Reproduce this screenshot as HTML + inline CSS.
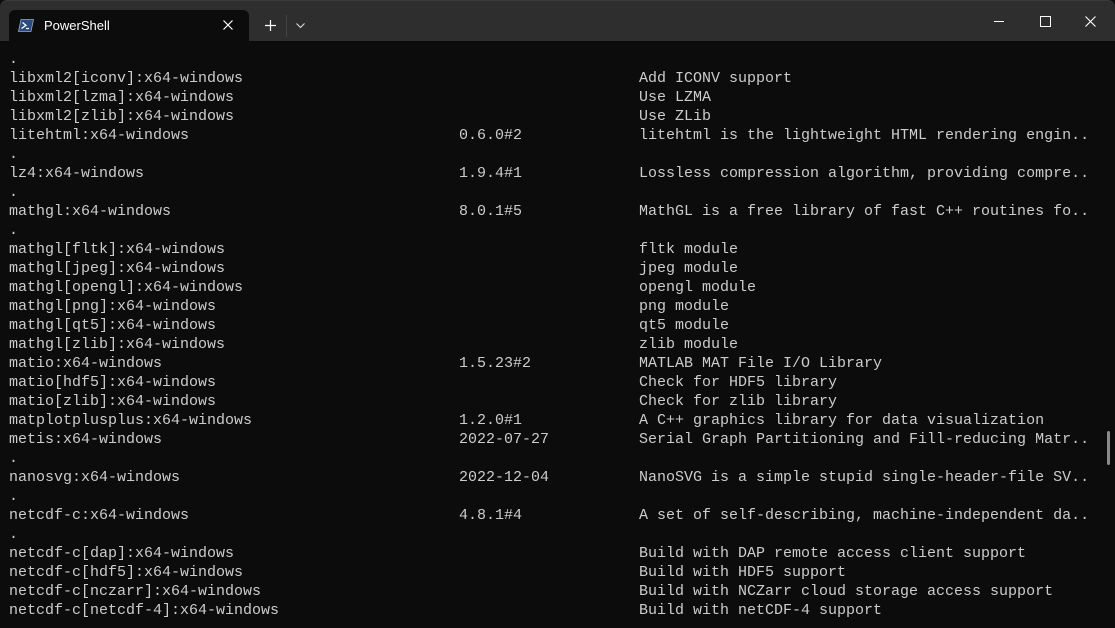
<!DOCTYPE html>
<html><head><meta charset="utf-8"><style>
html,body{margin:0;padding:0;width:1115px;height:628px;overflow:hidden;background:#0c0c0c}
.tb{position:absolute;left:0;top:0;width:1115px;height:41px;background:#2e2e2e;border-top:1px solid #3a3a3a;border-radius:7px 7px 0 0;box-sizing:border-box}
.tab{position:absolute;left:9px;top:9px;width:240px;height:32px;background:#0c0c0c;border-radius:6px 6px 0 0}
.tab .t{position:absolute;left:35px;top:8px;font:13px "Liberation Sans",sans-serif;color:#fff}
.term{position:absolute;left:0;top:50px;width:1115px;font:15px/19px "Liberation Mono",monospace;color:#cccccc}
.r{position:relative;height:19px;white-space:pre}
.r span{position:absolute;top:0}
.a{left:9px}.b{left:459px}.c{left:639px}
.sb{position:absolute;left:1107px;top:431px;width:3px;height:34px;background:#8a8a8a;border-radius:2px}
</style></head><body>
<div class="tb">
<div class="tab">
<svg style="position:absolute;left:9px;top:9px" width="16" height="13" viewBox="0 0 16 13"><path d="M3 0.5H15.5L13 12.5H0.5Z" fill="#2b4a80" stroke="#9ab" stroke-width="0.8"/><path d="M4.5 3.5L8 6.3L3.5 9.5" stroke="#fff" stroke-width="1.3" fill="none"/><path d="M8 9.5H11" stroke="#fff" stroke-width="1.2"/></svg>
<span class="t">PowerShell</span>
<svg style="position:absolute;left:214px;top:10px" width="10" height="10"><path d="M0.5 0.5L9.5 9.5M9.5 0.5L0.5 9.5" stroke="#fff" stroke-width="1.2"/></svg>
</div>
<svg style="position:absolute;left:265px;top:19px" width="11" height="11"><path d="M5.5 0V11M0 5.5H11" stroke="#fff" stroke-width="1.2"/></svg>
<div style="position:absolute;left:286px;top:14px;width:1px;height:22px;background:#444"></div>
<svg style="position:absolute;left:296px;top:22px" width="9" height="6"><path d="M0.5 0.5L4.5 4.5L8.5 0.5" stroke="#ddd" stroke-width="1.1" fill="none"/></svg>
<div style="position:absolute;left:994px;top:20px;width:10px;height:1px;background:#fff"></div>
<div style="position:absolute;left:1040px;top:15px;width:9px;height:9px;border:1px solid #fff"></div>
<svg style="position:absolute;left:1085px;top:15px" width="11" height="11"><path d="M0.5 0.5L10.5 10.5M10.5 0.5L0.5 10.5" stroke="#fff" stroke-width="1.1"/></svg>
</div>
<div class="term">
<div class="r"><span class="a">.</span></div>
<div class="r"><span class="a">libxml2[iconv]:x64-windows</span><span class="c">Add ICONV support</span></div>
<div class="r"><span class="a">libxml2[lzma]:x64-windows</span><span class="c">Use LZMA</span></div>
<div class="r"><span class="a">libxml2[zlib]:x64-windows</span><span class="c">Use ZLib</span></div>
<div class="r"><span class="a">litehtml:x64-windows</span><span class="b">0.6.0#2</span><span class="c">litehtml is the lightweight HTML rendering engin..</span></div>
<div class="r"><span class="a">.</span></div>
<div class="r"><span class="a">lz4:x64-windows</span><span class="b">1.9.4#1</span><span class="c">Lossless compression algorithm, providing compre..</span></div>
<div class="r"><span class="a">.</span></div>
<div class="r"><span class="a">mathgl:x64-windows</span><span class="b">8.0.1#5</span><span class="c">MathGL is a free library of fast C++ routines fo..</span></div>
<div class="r"><span class="a">.</span></div>
<div class="r"><span class="a">mathgl[fltk]:x64-windows</span><span class="c">fltk module</span></div>
<div class="r"><span class="a">mathgl[jpeg]:x64-windows</span><span class="c">jpeg module</span></div>
<div class="r"><span class="a">mathgl[opengl]:x64-windows</span><span class="c">opengl module</span></div>
<div class="r"><span class="a">mathgl[png]:x64-windows</span><span class="c">png module</span></div>
<div class="r"><span class="a">mathgl[qt5]:x64-windows</span><span class="c">qt5 module</span></div>
<div class="r"><span class="a">mathgl[zlib]:x64-windows</span><span class="c">zlib module</span></div>
<div class="r"><span class="a">matio:x64-windows</span><span class="b">1.5.23#2</span><span class="c">MATLAB MAT File I/O Library</span></div>
<div class="r"><span class="a">matio[hdf5]:x64-windows</span><span class="c">Check for HDF5 library</span></div>
<div class="r"><span class="a">matio[zlib]:x64-windows</span><span class="c">Check for zlib library</span></div>
<div class="r"><span class="a">matplotplusplus:x64-windows</span><span class="b">1.2.0#1</span><span class="c">A C++ graphics library for data visualization</span></div>
<div class="r"><span class="a">metis:x64-windows</span><span class="b">2022-07-27</span><span class="c">Serial Graph Partitioning and Fill-reducing Matr..</span></div>
<div class="r"><span class="a">.</span></div>
<div class="r"><span class="a">nanosvg:x64-windows</span><span class="b">2022-12-04</span><span class="c">NanoSVG is a simple stupid single-header-file SV..</span></div>
<div class="r"><span class="a">.</span></div>
<div class="r"><span class="a">netcdf-c:x64-windows</span><span class="b">4.8.1#4</span><span class="c">A set of self-describing, machine-independent da..</span></div>
<div class="r"><span class="a">.</span></div>
<div class="r"><span class="a">netcdf-c[dap]:x64-windows</span><span class="c">Build with DAP remote access client support</span></div>
<div class="r"><span class="a">netcdf-c[hdf5]:x64-windows</span><span class="c">Build with HDF5 support</span></div>
<div class="r"><span class="a">netcdf-c[nczarr]:x64-windows</span><span class="c">Build with NCZarr cloud storage access support</span></div>
<div class="r"><span class="a">netcdf-c[netcdf-4]:x64-windows</span><span class="c">Build with netCDF-4 support</span></div>
</div>
<div class="sb"></div>
</body></html>
